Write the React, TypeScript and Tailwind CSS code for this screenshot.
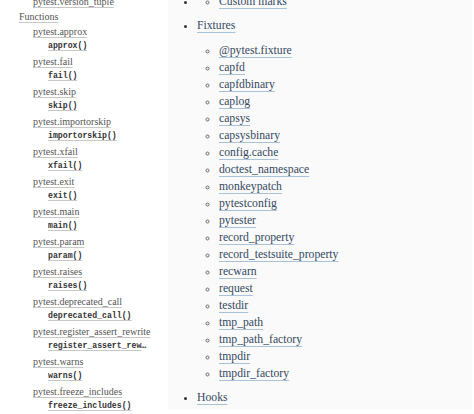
const sidebar: { text: string; level: 0 | 1 | 2 }[] = [
  { text: 'pytest.version_tuple', level: 1 },
  { text: 'Functions', level: 0 },
  { text: 'pytest.approx', level: 1 },
  { text: 'approx()', level: 2 },
  { text: 'pytest.fail', level: 1 },
  { text: 'fail()', level: 2 },
  { text: 'pytest.skip', level: 1 },
  { text: 'skip()', level: 2 },
  { text: 'pytest.importorskip', level: 1 },
  { text: 'importorskip()', level: 2 },
  { text: 'pytest.xfail', level: 1 },
  { text: 'xfail()', level: 2 },
  { text: 'pytest.exit', level: 1 },
  { text: 'exit()', level: 2 },
  { text: 'pytest.main', level: 1 },
  { text: 'main()', level: 2 },
  { text: 'pytest.param', level: 1 },
  { text: 'param()', level: 2 },
  { text: 'pytest.raises', level: 1 },
  { text: 'raises()', level: 2 },
  { text: 'pytest.deprecated_call', level: 1 },
  { text: 'deprecated_call()', level: 2 },
  { text: 'pytest.register_assert_rewrite', level: 1 },
  { text: 'register_assert_rewrite()', level: 2 },
  { text: 'pytest.warns', level: 1 },
  { text: 'warns()', level: 2 },
  { text: 'pytest.freeze_includes', level: 1 },
  { text: 'freeze_includes()', level: 2 },
]

const fixtures = [
  '@pytest.fixture',
  'capfd',
  'capfdbinary',
  'caplog',
  'capsys',
  'capsysbinary',
  'config.cache',
  'doctest_namespace',
  'monkeypatch',
  'pytestconfig',
  'pytester',
  'record_property',
  'record_testsuite_property',
  'recwarn',
  'request',
  'testdir',
  'tmp_path',
  'tmp_path_factory',
  'tmpdir',
  'tmpdir_factory',
]

function SidebarItem({ text, level }: { text: string; level: 0 | 1 | 2 }) {
  if (level === 2) {
    return (
      <li className="h-[15px] pl-[48px] pr-[20px] flex items-center">
        <span className="truncate [font-family:'Liberation_Mono',monospace] font-bold text-[8.2px] text-[#333] underline decoration-[#c8c8c8] underline-offset-2">
          {text}
        </span>
      </li>
    )
  }
  return (
    <li className={`h-[15px] flex items-center ${level === 0 ? 'pl-[19px]' : 'pl-[33px]'}`}>
      <span className="[font-family:'Liberation_Serif',serif] text-[10px] text-[#555] underline decoration-[#c8c8c8] underline-offset-2 whitespace-nowrap">
        {text}
      </span>
    </li>
  )
}

function Link({ children }: { children: string }) {
  return (
    <span className="text-[#34495e] underline decoration-[#a9c2d8] underline-offset-[3px]">{children}</span>
  )
}

export default function App() {
  return (
    <div className="w-[474px] h-[414px] bg-white flex overflow-hidden">
      <nav className="w-[168px] shrink-0 overflow-hidden">
        <ul className="-mt-[6px]">
          {sidebar.map((item, i) => (
            <SidebarItem key={i} text={item.text} level={item.level} />
          ))}
        </ul>
      </nav>
      <main className="w-[304px] h-[410px] bg-[#fafafa] overflow-hidden [font-family:'Liberation_Serif',serif] text-[11.7px]">
        <ul className="-mt-[7px] pl-[29px] list-disc marker:text-[#333]">
          <li>
            <ul className="list-[circle] pl-[22px] marker:text-[#666]">
              <li className="h-[17px] leading-[17px]">
                <Link>Custom marks</Link>
              </li>
            </ul>
          </li>
          <li className="mt-[7px] leading-[17px]">
            <Link>Fixtures</Link>
            <ul className="list-[circle] pl-[22px] mt-[8px] marker:text-[#666]">
              {fixtures.map((f) => (
                <li key={f} className="h-[17px] leading-[17px]">
                  <Link>{f}</Link>
                </li>
              ))}
            </ul>
          </li>
          <li className="mt-[7px] leading-[17px]">
            <Link>Hooks</Link>
          </li>
        </ul>
      </main>
    </div>
  )
}
